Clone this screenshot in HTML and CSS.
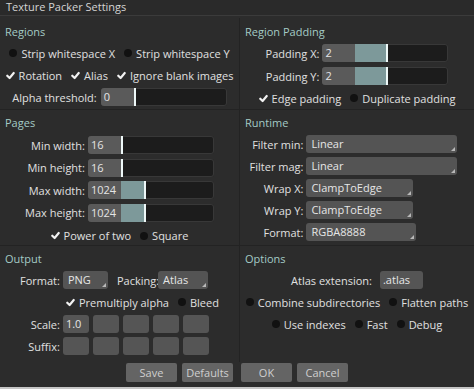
FILE: index.html
```html
<!DOCTYPE html>
<html lang="en">
<head>
    <meta charset="UTF-8">
    <meta name="viewport" content="width=device-width, initial-scale=1.0">
    <title>Texture Packer Settings</title>
    <link rel="stylesheet" href="styles.css">
</head>
<body>
    <div class="window">
        <div class="title">Texture Packer Settings</div>

        <div class="grid">
            <!-- Regions -->
            <section class="panel p-top">
                <h2>Regions</h2>
                <div class="rows gap-left">
                    <div class="row">
                        <label class="opt"><span class="radio"></span>Strip whitespace X</label>
                        <label class="opt"><span class="radio"></span>Strip whitespace Y</label>
                    </div>
                    <div class="row">
                        <label class="opt"><svg class="check" viewBox="0 0 10 10"><path d="M1.4 5.2 L4 7.8 L8.6 2.2"/></svg>Rotation</label>
                        <label class="opt"><svg class="check" viewBox="0 0 10 10"><path d="M1.4 5.2 L4 7.8 L8.6 2.2"/></svg>Alias</label>
                        <label class="opt"><svg class="check" viewBox="0 0 10 10"><path d="M1.4 5.2 L4 7.8 L8.6 2.2"/></svg>Ignore blank images</label>
                    </div>
                    <div class="row">
                        <span class="lbl">Alpha threshold:</span>
                        <div class="slider"><span class="num">0</span><span class="fill" style="width:0px"></span><span class="knob"></span></div>
                    </div>
                </div>
            </section>

            <!-- Region Padding -->
            <section class="panel p-top">
                <h2>Region Padding</h2>
                <div class="form pad-form">
                    <span class="lbl">Padding X:</span>
                    <div class="slider"><span class="num">2</span><span class="fill" style="width:31px"></span><span class="knob"></span></div>
                    <span class="lbl">Padding Y:</span>
                    <div class="slider"><span class="num">2</span><span class="fill" style="width:31px"></span><span class="knob"></span></div>
                </div>
                <div class="row edge-row">
                    <label class="opt"><svg class="check" viewBox="0 0 10 10"><path d="M1.4 5.2 L4 7.8 L8.6 2.2"/></svg>Edge padding</label>
                    <label class="opt"><span class="radio"></span>Duplicate padding</label>
                </div>
            </section>

            <!-- Pages -->
            <section class="panel">
                <h2>Pages</h2>
                <div class="form pages-form">
                    <span class="lbl">Min width:</span>
                    <div class="slider"><span class="num">16</span><span class="fill" style="width:0px"></span><span class="knob"></span></div>
                    <span class="lbl">Min height:</span>
                    <div class="slider"><span class="num">16</span><span class="fill" style="width:0px"></span><span class="knob"></span></div>
                    <span class="lbl">Max width:</span>
                    <div class="slider"><span class="num">1024</span><span class="fill" style="width:23px"></span><span class="knob"></span></div>
                    <span class="lbl">Max height:</span>
                    <div class="slider"><span class="num">1024</span><span class="fill" style="width:23px"></span><span class="knob"></span></div>
                </div>
                <div class="row power-row">
                    <label class="opt"><svg class="check" viewBox="0 0 10 10"><path d="M1.4 5.2 L4 7.8 L8.6 2.2"/></svg>Power of two</label>
                    <label class="opt"><span class="radio"></span>Square</label>
                </div>
            </section>

            <!-- Runtime -->
            <section class="panel">
                <h2>Runtime</h2>
                <div class="form runtime-form">
                    <span class="lbl">Filter min:</span>
                    <div class="select w151">Linear</div>
                    <span class="lbl">Filter mag:</span>
                    <div class="select w151">Linear</div>
                    <span class="lbl">Wrap X:</span>
                    <div class="select w107">ClampToEdge</div>
                    <span class="lbl">Wrap Y:</span>
                    <div class="select w107">ClampToEdge</div>
                    <span class="lbl">Format:</span>
                    <div class="select w110">RGBA8888</div>
                </div>
            </section>

            <!-- Output -->
            <section class="panel">
                <h2>Output</h2>
                <div class="form output-form">
                    <span class="lbl">Format:</span>
                    <div class="row inline">
                        <div class="select w45">PNG</div>
                        <span class="lbl packing">Packing:</span>
                        <div class="select w50">Atlas</div>
                    </div>
                    <span></span>
                    <div class="row inline premult">
                        <label class="opt"><svg class="check" viewBox="0 0 10 10"><path d="M1.4 5.2 L4 7.8 L8.6 2.2"/></svg>Premultiply alpha</label>
                        <label class="opt"><span class="radio"></span>Bleed</label>
                    </div>
                    <span class="lbl">Scale:</span>
                    <div class="boxes">
                        <span class="box">1.0</span><span class="box"></span><span class="box"></span><span class="box"></span><span class="box"></span>
                    </div>
                    <span class="lbl">Suffix:</span>
                    <div class="boxes">
                        <span class="box"></span><span class="box"></span><span class="box"></span><span class="box"></span><span class="box"></span>
                    </div>
                </div>
            </section>

            <!-- Options -->
            <section class="panel">
                <h2>Options</h2>
                <div class="rows">
                    <div class="row">
                        <span class="lbl">Atlas extension:</span>
                        <span class="box ext">.atlas</span>
                    </div>
                    <div class="row">
                        <label class="opt"><span class="radio"></span>Combine subdirectories</label>
                        <label class="opt"><span class="radio"></span>Flatten paths</label>
                    </div>
                    <div class="row">
                        <label class="opt"><span class="radio"></span>Use indexes</label>
                        <label class="opt"><span class="radio"></span>Fast</label>
                        <label class="opt"><span class="radio"></span>Debug</label>
                    </div>
                </div>
            </section>
        </div>

        <div class="buttons">
            <button>Save</button>
            <button>Defaults</button>
            <button class="ok">OK</button>
            <button>Cancel</button>
        </div>
    </div>
</body>
</html>
```

FILE: styles.css
```css
body {
    margin: 0;
    background-color: #c6c6c6;
    font-family: "Open Sans", "DejaVu Sans", sans-serif;
    font-size: 11px;
    color: #e0e0e0;
}
.window {
    width: 474px;
    height: 387px;
    background-color: #2c2c2c;
    display: flex;
    flex-direction: column;
}
.title {
    height: 15px;
    line-height: 14px;
    padding-left: 6px;
    color: #d4d4d4;
    background-color: #2a2a2a;
    border-bottom: 1px solid #3b3b3b;
}
.grid {
    margin-top: 2px;
    display: grid;
    grid-template-columns: 239px 1fr;
    grid-template-rows: 91px 135px 116px;
    gap: 1px;
    background-color: #232323;
}
.panel {
    background-color: #2c2c2c;
    padding-top: 4px;
    display: flex;
    flex-direction: column;
    align-items: center;
}
.panel.p-top {
    padding-top: 5px;
}
h2 {
    align-self: flex-start;
    margin: 0;
    padding-left: 5px;
    height: 18px;
    line-height: 18px;
    font-size: 11px;
    font-weight: normal;
    color: #a4cbc6;
}
.rows {
    display: flex;
    flex-direction: column;
    align-items: center;
    gap: 4px;
    margin-top: 3px;
}
.row {
    display: flex;
    align-items: center;
    height: 18px;
    gap: 9px;
    white-space: nowrap;
}
.opt {
    display: flex;
    align-items: center;
    gap: 4px;
}
.radio {
    width: 8px;
    height: 8px;
    border-radius: 50%;
    background-color: #111;
}
.check {
    width: 9px;
    height: 9px;
    fill: none;
    stroke: #f2f2f2;
    stroke-width: 2.4;
    stroke-linecap: round;
    stroke-linejoin: round;
}
.lbl {
    white-space: nowrap;
}
.row .lbl {
    margin-right: -5px;
}

/* label / field tables */
.form {
    display: grid;
    grid-template-columns: auto auto;
    column-gap: 3px;
    align-items: center;
    margin-top: 3px;
}
.form > .lbl {
    justify-self: end;
}
.form > :not(.lbl) {
    justify-self: start;
}
.pad-form {
    row-gap: 5px;
}
.pages-form {
    margin-top: 4px;
    row-gap: 4.5px;
}
.runtime-form {
    row-gap: 4px;
    margin-right: 7px;
}
.output-form {
    row-gap: 4px;
}
.edge-row {
    margin-top: 4px;
}
.power-row {
    margin-top: 5px;
}

/* slider with number field */
.slider {
    display: flex;
    width: 126px;
    height: 18px;
    border-radius: 3px;
    background-color: #1c1c1c;
    box-shadow: inset 0 0 0 1px #383838;
    overflow: hidden;
}
.num {
    width: 30px;
    padding-left: 3px;
    line-height: 18px;
    background-color: #5a5a5a;
    color: #e4e4e4;
}
.fill {
    background-color: #7d999a;
}
.knob {
    width: 2px;
    background-color: #eef8f8;
}

/* drop downs */
.select {
    position: relative;
    box-sizing: border-box;
    height: 18px;
    line-height: 18px;
    padding-left: 5px;
    border-radius: 3px;
    background-color: #545454;
    color: #e6e6e6;
}
.select::after {
    content: "";
    position: absolute;
    right: 2px;
    bottom: 2px;
    border-left: 4px solid transparent;
    border-bottom: 4px solid #b8b8b8;
}
.w151 { width: 151px; }
.w107 { width: 107px; }
.w110 { width: 110px; }
.w45 { width: 45px; }
.w50 { width: 50px; }

.inline {
    gap: 4px;
}
.packing {
    margin: 0 0 0 5px;
}
.premult {
    gap: 9px;
    padding-left: 3px;
}
.boxes {
    display: flex;
    gap: 4px;
}
.box {
    box-sizing: border-box;
    width: 26px;
    height: 18px;
    line-height: 18px;
    padding-left: 3px;
    border-radius: 3px;
    background-color: #555;
    color: #e6e6e6;
}
.box.ext {
    width: 43px;
    margin-left: 4px;
}

.buttons {
    display: flex;
    justify-content: center;
    gap: 5px;
    padding: 1px 0 0 0;
}
button {
    width: 51px;
    height: 19px;
    padding: 0;
    border: none;
    border-radius: 2px;
    background-color: #646464;
    color: #cfcfcf;
    font-family: "Open Sans", "DejaVu Sans", sans-serif;
    font-size: 11px;
}
button.ok {
    margin-left: 3px;
}
```
